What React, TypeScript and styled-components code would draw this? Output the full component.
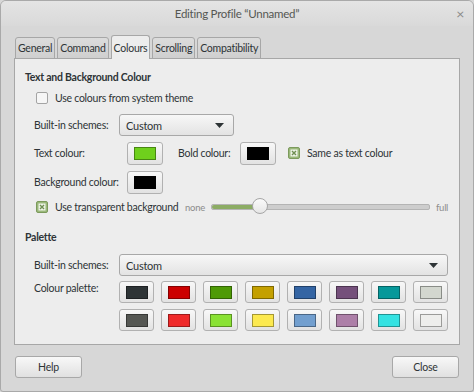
import styled, { createGlobalStyle } from 'styled-components';

const GlobalStyle = createGlobalStyle`
  html, body {
    margin: 0;
    padding: 0;
    background: #d7d7d7;
  }
  body {
    font-family: Lato, 'Noto Sans', sans-serif;
    font-size: 10.5px;
    letter-spacing: -0.25px;
    color: #2e3436;
    white-space: nowrap;
  }
  svg {
    flex: none;
  }
`;

const TANGO = [
  ['#2e3436', '#cc0000', '#4e9a06', '#c4a000', '#3465a4', '#75507b', '#06989a', '#d3d7cf'],
  ['#555753', '#ef2929', '#8ae234', '#fce94f', '#729fcf', '#ad7fa8', '#34e2e2', '#eeeeec'],
];

const CheckMark = ({ checked }: { checked?: boolean }) =>
  checked ? (
    <svg width='12' height='12' viewBox='0 0 12 12'>
      <rect x='0.5' y='0.5' width='11' height='11' rx='1.5' fill='#9ab87a' stroke='#7c9a5c' />
      <rect x='2.5' y='2.5' width='7' height='7' fill='#eef3e8' />
      <path d='M4 4 L8 8 M8 4 L4 8' stroke='#6f8f52' strokeWidth='1.4' />
    </svg>
  ) : (
    <svg width='12' height='12' viewBox='0 0 12 12'>
      <rect x='0.5' y='0.5' width='11' height='11' rx='1.5' fill='#f6f6f6' stroke='#a4a4a4' />
    </svg>
  );

const Caret = () => (
  <svg width='9' height='5' viewBox='0 0 9 5'>
    <path d='M0 0 H9 L4.5 5 Z' fill='#2e3436' />
  </svg>
);

const App = () => {
  return (
    <Window>
      <GlobalStyle />
      <TitleBar>
        <span />
        <Title>Editing Profile “Unnamed”</Title>
        <CloseX>×</CloseX>
      </TitleBar>

      <Body>
        <Tabs>
          <Tab>General</Tab>
          <Tab>Command</Tab>
          <Tab $active>Colours</Tab>
          <Tab>Scrolling</Tab>
          <Tab>Compatibility</Tab>
        </Tabs>

        <Notebook>
          <SectionTitle>Text and Background Colour</SectionTitle>
          <CheckRow $h={24}>
            <CheckMark />
            <span>Use colours from system theme</span>
          </CheckRow>
          <FormRow $h={30}>
            <Label>Built-in schemes:</Label>
            <Combo $width={115}>
              <span>Custom</span>
              <Caret />
            </Combo>
          </FormRow>
          <FormRow $h={26}>
            <Label>Text colour:</Label>
            <ColourButton $offset={8}>
              <Swatch $colour='#6fd01c' />
            </ColourButton>
            <InlineLabel>Bold colour:</InlineLabel>
            <ColourButton>
              <Swatch $colour='#000000' />
            </ColourButton>
            <InlineCheck>
              <CheckMark checked />
              <span>Same as text colour</span>
            </InlineCheck>
          </FormRow>
          <FormRow $h={32}>
            <Label>Background colour:</Label>
            <ColourButton $offset={8}>
              <Swatch $colour='#000000' />
            </ColourButton>
          </FormRow>
          <CheckRow $h={18}>
            <CheckMark checked />
            <TransparentLabel>Use transparent background</TransparentLabel>
            <SliderWrap>
              <Muted>none</Muted>
              <Track>
                <Fill style={{ width: '22%' }} />
                <Knob />
              </Track>
              <Muted>full</Muted>
            </SliderWrap>
          </CheckRow>

          <SectionTitle $top={12}>Palette</SectionTitle>
          <FormRow $h={22} $top={8}>
            <Label>Built-in schemes:</Label>
            <Combo $width={329}>
              <span>Custom</span>
              <Caret />
            </Combo>
          </FormRow>
          <PaletteRow>
            <Label $top={1}>Colour palette:</Label>
            <PaletteGrid>
              {TANGO.flat().map((c, i) => (
                <PaletteButton key={i}>
                  <Swatch $colour={c} />
                </PaletteButton>
              ))}
            </PaletteGrid>
          </PaletteRow>
        </Notebook>

        <Footer>
          <PushButton>Help</PushButton>
          <PushButton>Close</PushButton>
        </Footer>
      </Body>
    </Window>
  );
};

const Window = styled.div`
  width: 474px;
  height: 392px;
  box-sizing: border-box;
  border: 1px solid #a9a9a9;
  border-radius: 6px 6px 3px 3px;
  background: #d7d7d7;
  display: flex;
  flex-direction: column;
  overflow: hidden;
`;

const TitleBar = styled.div`
  height: 25px;
  display: grid;
  grid-template-columns: 1fr auto 1fr;
  align-items: center;
  background: linear-gradient(#e4e4e4, #d9d9d9);
`;

const Title = styled.div`
  font-size: 11.5px;
  color: #555753;
`;

const CloseX = styled.div`
  justify-self: end;
  margin-right: 9px;
  font-size: 14px;
  color: #8a8a8a;
`;

const Body = styled.div`
  flex: 1;
  padding: 8px 13px 0 13px;
  display: flex;
  flex-direction: column;
`;

const Tabs = styled.div`
  display: flex;
  align-items: flex-end;
  gap: 2px;
  padding-left: 1px;
  height: 25px;
  margin-bottom: -1px;
  position: relative;
  z-index: 1;
`;

const Tab = styled.div<{ $active?: boolean }>`
  height: ${(p) => (p.$active ? 24 : 22)}px;
  box-sizing: border-box;
  padding: 0 2px;
  display: flex;
  align-items: center;
  border: 1px solid #a7a7a7;
  border-bottom: ${(p) => (p.$active ? 'none' : '1px solid #a7a7a7')};
  border-radius: 3px 3px 0 0;
  background: ${(p) => (p.$active ? '#ededed' : 'linear-gradient(#dcdcdc, #cfcfcf)')};
  color: #2e3436;
`;

const Notebook = styled.div`
  height: 287px;
  box-sizing: border-box;
  border: 1px solid #a7a7a7;
  background: #ededed;
  padding: 9px 11px 0 10px;
  display: flex;
  flex-direction: column;
`;

const SectionTitle = styled.div<{ $top?: number }>`
  height: 18px;
  margin-top: ${(p) => p.$top || 0}px;
  display: flex;
  align-items: center;
  font-weight: bold;
`;

const CheckRow = styled.div<{ $h: number }>`
  height: ${(p) => p.$h}px;
  display: flex;
  align-items: center;
  gap: 7px;
  padding-left: 11px;
`;

const TransparentLabel = styled.span`
  width: 123px;
`;

const FormRow = styled.div<{ $h: number; $top?: number }>`
  height: ${(p) => p.$h}px;
  margin-top: ${(p) => p.$top || 0}px;
  display: flex;
  align-items: center;
  padding-left: 9px;
`;

const Label = styled.div<{ $top?: number }>`
  width: 85px;
  flex: none;
  margin-top: ${(p) => p.$top || 0}px;
`;

const InlineLabel = styled.div`
  margin-left: 15px;
  width: 62px;
`;

const InlineCheck = styled.div`
  display: flex;
  align-items: center;
  gap: 7px;
  margin-left: 12px;
`;

const Combo = styled.div<{ $width: number }>`
  width: ${(p) => p.$width}px;
  height: 22px;
  box-sizing: border-box;
  border: 1px solid #a8a8a8;
  border-radius: 3px;
  background: linear-gradient(#f7f7f7, #e3e3e3);
  display: flex;
  align-items: center;
  justify-content: space-between;
  padding: 0 9px 0 6px;
  font-size: 11px;
`;

const ColourButton = styled.div<{ $offset?: number }>`
  width: 36px;
  height: 23px;
  flex: none;
  margin-left: ${(p) => p.$offset || 0}px;
  box-sizing: border-box;
  border: 1px solid #b1b1b1;
  border-radius: 3px;
  background: linear-gradient(#f8f8f8, #e2e2e2);
  display: flex;
  align-items: center;
  justify-content: center;
`;

const Swatch = styled.div<{ $colour: string }>`
  width: 22px;
  height: 13px;
  box-sizing: border-box;
  background: ${(p) => p.$colour};
  border: 1px solid rgba(0, 0, 0, 0.35);
`;

const SliderWrap = styled.div`
  display: flex;
  align-items: center;
  gap: 6px;
`;

const Muted = styled.span`
  color: #8c8c8c;
  font-size: 9.5px;
  width: 20px;
`;

const Track = styled.div`
  position: relative;
  width: 217px;
  height: 4px;
  border: 1px solid #b4b4b4;
  border-radius: 2px;
  background: #cdcdcd;
`;

const Fill = styled.div`
  height: 100%;
  border-radius: 2px;
  background: #8cac64;
`;

const Knob = styled.div`
  position: absolute;
  left: 40px;
  top: -7px;
  width: 16px;
  height: 16px;
  box-sizing: border-box;
  border-radius: 50%;
  border: 1px solid #a6a6a6;
  background: linear-gradient(#fafafa, #e6e6e6);
`;

const PaletteRow = styled.div`
  margin-top: 5px;
  display: flex;
  align-items: flex-start;
  padding-left: 9px;
`;

const PaletteGrid = styled.div`
  display: grid;
  grid-template-columns: repeat(8, 35px);
  grid-auto-rows: 22px;
  column-gap: 7px;
  row-gap: 6px;
`;

const PaletteButton = styled.div`
  box-sizing: border-box;
  border: 1px solid #b1b1b1;
  border-radius: 3px;
  background: linear-gradient(#f8f8f8, #e2e2e2);
  display: flex;
  align-items: center;
  justify-content: center;
`;

const Footer = styled.div`
  display: flex;
  justify-content: space-between;
  padding: 11px 1px 0 1px;
`;

const PushButton = styled.div`
  width: 67px;
  height: 22px;
  box-sizing: border-box;
  border: 1px solid #a8a8a8;
  border-radius: 3px;
  background: linear-gradient(#f8f8f8, #e0e0e0);
  display: flex;
  align-items: center;
  justify-content: center;
`;

export default App;
